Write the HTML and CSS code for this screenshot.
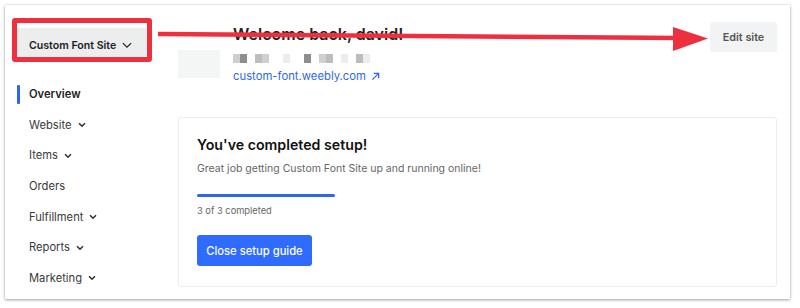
FILE: index.html
```html
<!DOCTYPE html>
<html lang="en">
<head>
<meta charset="utf-8">
<title>Overview</title>
<link rel="stylesheet" href="styles.css">
</head>
<body>
<div class="frame">
  <aside class="sidebar">
    <button class="site-switch">Custom Font Site
      <svg class="chev-lg" viewBox="0 0 12 8" width="10" height="7"><path d="M1 1.2 L6 6 L11 1.2" fill="none" stroke="#222" stroke-width="1.5"/></svg>
    </button>
    <nav class="nav">
      <a class="nav-item active">Overview</a>
      <a class="nav-item">Website <svg class="chev" viewBox="0 0 10 7" width="8" height="6"><path d="M1.3 1.3 L5 5 L8.7 1.3" fill="none" stroke="#333" stroke-width="2"/></svg></a>
      <a class="nav-item">Items <svg class="chev" viewBox="0 0 10 7" width="8" height="6"><path d="M1.3 1.3 L5 5 L8.7 1.3" fill="none" stroke="#333" stroke-width="2"/></svg></a>
      <a class="nav-item">Orders</a>
      <a class="nav-item">Fulfillment <svg class="chev" viewBox="0 0 10 7" width="8" height="6"><path d="M1.3 1.3 L5 5 L8.7 1.3" fill="none" stroke="#333" stroke-width="2"/></svg></a>
      <a class="nav-item">Reports <svg class="chev" viewBox="0 0 10 7" width="8" height="6"><path d="M1.3 1.3 L5 5 L8.7 1.3" fill="none" stroke="#333" stroke-width="2"/></svg></a>
      <a class="nav-item">Marketing <svg class="chev" viewBox="0 0 10 7" width="8" height="6"><path d="M1.3 1.3 L5 5 L8.7 1.3" fill="none" stroke="#333" stroke-width="2"/></svg></a>
    </nav>
  </aside>
  <main class="main">
    <header class="head">
      <div class="thumb"></div>
      <div class="welcome">
        <h1 class="title">Welcome back, david!</h1>
        <div class="email">
          <span class="px s2"></span><span class="px s4"></span><span class="gap6"></span><span class="px s3"></span><span class="px s2"></span><span class="gap12"></span><span class="px s1"></span><span class="gap12"></span><span class="px s4"></span><span class="gap6"></span><span class="px s2"></span><span class="px s3"></span><span class="gap6"></span><span class="px s1"></span><span class="gap6"></span><span class="px s3"></span><span class="px s1"></span>
        </div>
        <a class="site-link">custom-font.weebly.com <svg viewBox="0 0 10 10" width="9" height="9"><path d="M1.5 8.5 L8.5 1.5 M3 1.5 H8.5 V7" fill="none" stroke="#2f66ee" stroke-width="1.4"/></svg></a>
      </div>
      <button class="edit-btn">Edit site</button>
    </header>
    <section class="card">
      <h2 class="card-title">You've completed setup!</h2>
      <p class="card-text">Great job getting Custom Font Site up and running online!</p>
      <div class="progress"></div>
      <p class="count">3 of 3 completed</p>
      <button class="primary">Close setup guide</button>
    </section>
  </main>
  <div class="anno-box"></div>
  <svg class="anno-arrow" width="800" height="80" viewBox="0 0 800 80">
    <path d="M158 29 L684 33" stroke="#ee2f3d" stroke-width="4.5" fill="none"/>
    <path d="M673 22 L708 33.5 L673 46 Z" fill="#ee2f3d"/>
  </svg>
</div>
</body>
</html>
```

FILE: styles.css
```css
* { box-sizing: border-box; }
html, body { margin: 0; padding: 0; background: #fff; }
body {
  font-family: Inter, "Noto Sans", "Liberation Sans", sans-serif;
  color: #222;
  width: 800px;
  height: 308px;
  overflow: hidden;
  padding: 5px 10px 9px 5px;
}
.frame {
  position: relative;
  width: 785px;
  height: 294px;
  background: #fff;
  box-shadow: 0 1px 3px rgba(0,0,0,0.35), 0 0 1px rgba(0,0,0,0.2);
  display: flex;
  overflow: hidden;
}
.sidebar {
  width: 173px;
  flex: none;
  padding: 23px 0 0 12px;
}
.site-switch {
  display: flex;
  align-items: center;
  gap: 6px;
  width: 131px;
  height: 34px;
  border: 0;
  border-radius: 3px;
  background: #eceded;
  font: 600 10.6px Inter, "Noto Sans", sans-serif;
  color: #222;
  padding: 0 0 0 12px;
}
.nav { display: flex; flex-direction: column; margin-top: 17px; }
.nav-item {
  display: flex;
  align-items: center;
  gap: 6px;
  height: 30.6px;
  padding-left: 12px;
  font-size: 11.2px;
  color: #3a3a3a;
  position: relative;
}
.nav-item.active { font-weight: 600; color: #222; }
.nav-item.active::before {
  content: "";
  position: absolute;
  left: 0; top: 6px; bottom: 6px;
  width: 3px;
  background: #2f66ee;
  border-radius: 1px;
}
.chev { margin-top: 1px; }
.main {
  flex: 1;
  padding: 17px 13px 0 0;
  display: flex;
  flex-direction: column;
}
.head { display: flex; align-items: flex-start; }
.thumb {
  width: 42px; height: 28px;
  background: #f4f5f5;
  margin-top: 28px;
  margin-right: 13px;
  flex: none;
}
.welcome { flex: 1; }
.title {
  margin: 0;
  font-size: 16px;
  font-weight: 600;
  color: #222;
  line-height: 24px;
}
.email { display: flex; height: 9px; margin-top: 8px; }
.px { width: 7px; height: 9px; }
.s1 { background: #ececec; }
.s2 { background: #cfcfcf; }
.s3 { background: #bdbdbf; }
.s4 { background: #8e8e90; }
.gap6 { width: 8px; }
.gap12 { width: 14px; }
.site-link {
  display: flex;
  align-items: center;
  gap: 5px;
  margin-top: 5px;
  font-size: 11.3px;
  color: #2f66ee;
  line-height: 16px;
}
.edit-btn {
  flex: none;
  width: 67px; height: 30px;
  margin-top: 0;
  border: 0;
  border-radius: 3px;
  background: #f2f3f4;
  color: #555;
  font: 600 10.8px Inter, "Noto Sans", sans-serif;
}
.card {
  margin-top: 33px;
  height: 170px;
  border: 1px solid #ececec;
  border-radius: 3px;
  padding: 17px 18px 0 18px;
}
.card-title { margin: 0; font-size: 14.2px; font-weight: 600; color: #111; line-height: 20px; }
.card-text { margin: 6px 0 0; font-size: 10.5px; color: #666; line-height: 16px; }
.progress { width: 138px; height: 3px; background: #2f66ee; border-radius: 2px; margin-top: 17px; }
.count { margin: 7px 0 0; font-size: 9.3px; color: #666; line-height: 14px; }
.primary {
  margin-top: 17px;
  width: 115px; height: 31px;
  border: 0; border-radius: 3px;
  background: #2f6bff;
  color: #fff;
  font: 500 11.2px Inter, "Noto Sans", sans-serif;
}
.anno-box {
  position: absolute;
  left: 7px; top: 13px;
  width: 140px; height: 44px;
  border: 5px solid #ee2f3d;
  border-radius: 3px;
}
.anno-arrow { position: absolute; left: -5px; top: 0; pointer-events: none; }
```
